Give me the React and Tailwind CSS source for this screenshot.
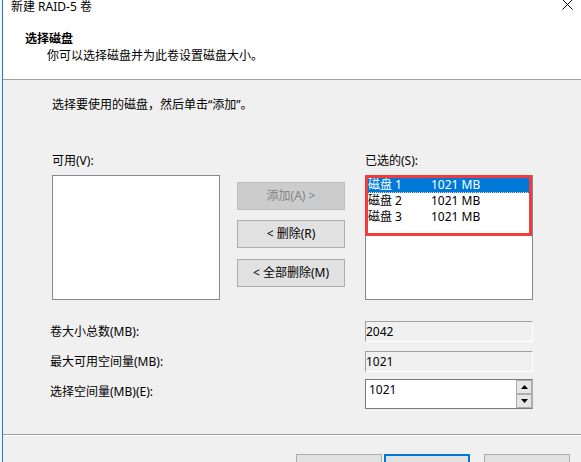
import React from "react";

const FONT = { fontFamily: '"Noto Sans", "Noto Sans CJK SC", sans-serif' };

function Btn({ children, disabled, className = "" }) {
  return (
    <div
      className={
        "flex h-[28px] w-[108px] shrink-0 items-center justify-center border text-[12px] leading-[16px] " +
        (disabled
          ? "border-[#bfbfbf] bg-[#cccccc] text-[#838383]"
          : "border-[#adadad] bg-[#e1e1e1] text-black") +
        " " +
        className
      }
    >
      {children}
    </div>
  );
}

function Arrow({ up }) {
  return (
    <svg width="7" height="4" viewBox="0 0 7 4">
      {up ? <path d="M0 4 L3.5 0 L7 4 Z" fill="#000" /> : <path d="M0 0 L3.5 4 L7 0 Z" fill="#000" />}
    </svg>
  );
}

export default function App() {
  const rows = [
    { n: "磁盘 1", s: "1021 MB", sel: true },
    { n: "磁盘 2", s: "1021 MB" },
    { n: "磁盘 3", s: "1021 MB" },
  ];
  return (
    <div className="flex h-[462px] w-[581px] overflow-hidden bg-white text-black" style={FONT}>
      <div className="w-[2px] shrink-0 bg-[#f4f4f4]" />
      <div className="w-px shrink-0 bg-[#1a7fd4]" />
      <div className="flex min-w-0 flex-1 flex-col">
        {/* header */}
        <div className="h-[79px] shrink-0 bg-white">
          <div className="flex h-[12px] items-start justify-between pl-[8px] pr-[8px] pt-px">
            <div className="text-[12px] leading-[12px]">新建 RAID-5 卷</div>
            <svg width="11" height="11" viewBox="0 0 11 11" className="mt-[-2px]">
              <path d="M0.5 0.5 L10.5 10.5 M10.5 0.5 L0.5 10.5" stroke="#000" strokeWidth="1" />
            </svg>
          </div>
          <div className="mt-[19px] pl-[22px] text-[12px] font-bold leading-[16px]">选择磁盘</div>
          <div className="mt-[1px] pl-[44px] text-[12px] leading-[16px]">
            你可以选择磁盘并为此卷设置磁盘大小。
          </div>
        </div>
        <div className="h-px shrink-0 bg-[#a0a0a0]" />
        {/* body */}
        <div className="flex min-h-0 flex-1 flex-col bg-[#f0f0f0]">
          <div className="shrink-0 pl-[49px] pt-[17px] text-[12px] leading-[16px]">
            选择要使用的磁盘，然后单击“添加”。
          </div>

          <div className="mt-[40px] flex shrink-0 pl-[49px]">
            <div className="flex w-[168px] flex-col">
              <div className="text-[12px] leading-[16px]">可用(V):</div>
              <div className="mt-[6px] h-[125px] border border-[#828790] bg-white" />
            </div>
            <div className="ml-[17px] flex flex-col pt-[29px]">
              <Btn disabled>添加(A) &gt;</Btn>
              <Btn className="mt-[10px]">&lt; 删除(R)</Btn>
              <Btn className="mt-[11px]">&lt; 全部删除(M)</Btn>
            </div>
            <div className="ml-[20px] flex w-[168px] flex-col">
              <div className="text-[12px] leading-[16px]">已选的(S):</div>
              <div className="relative mt-[6px] h-[125px] border border-[#828790] bg-white pt-px">
                {rows.map((r) => (
                  <div
                    key={r.n}
                    className={
                      "flex h-[16px] items-center pl-[2px] text-[12px] leading-[16px] " +
                      (r.sel ? "border-b border-dotted border-[#e8d9b0] bg-[#0078d7] text-white" : "text-black")
                    }
                  >
                    <span className="w-[63px]">{r.n}</span>
                    <span>{r.s}</span>
                  </div>
                ))}
                <div className="absolute left-[-1px] top-[-1px] h-[61px] w-[167px] border-[3px] border-[#f03c3c]" />
              </div>
            </div>
          </div>

          {/* form rows */}
          <div className="mt-[21px] flex h-[21px] shrink-0 items-center pl-[47px]">
            <div className="w-[315px] text-[12px] leading-[16px]">卷大小总数(MB):</div>
            <div className="flex h-[21px] w-[168px] items-center border-b border-l border-r border-t border-b-white border-l-[#a0a0a0] border-r-white border-t-[#a0a0a0] bg-[#f0f0f0] text-[12px] leading-[16px]">
              2042
            </div>
          </div>
          <div className="mt-[9px] flex h-[21px] shrink-0 items-center pl-[47px]">
            <div className="w-[315px] text-[12px] leading-[16px]">最大可用空间量(MB):</div>
            <div className="flex h-[21px] w-[168px] items-center border-b border-l border-r border-t border-b-white border-l-[#a0a0a0] border-r-white border-t-[#a0a0a0] bg-[#f0f0f0] text-[12px] leading-[16px]">
              1021
            </div>
          </div>
          <div className="mt-[7px] flex h-[30px] shrink-0 items-start pl-[47px]">
            <div className="w-[315px] pt-[5px] text-[12px] leading-[16px]">选择空间量(MB)(E):</div>
            <div className="flex h-[30px] w-[168px] border border-[#7a7a7a] border-r-[#adadad] bg-white">
              <div className="flex-1 pl-[3px] pt-[2px] text-[12px] leading-[16px]">1021</div>
              <div className="flex w-[16px] flex-col">
                <div className="flex h-[14px] items-center justify-center border border-[#adadad] bg-[#e6e6e6]">
                  <Arrow up />
                </div>
                <div className="flex h-[14px] items-center justify-center border border-[#adadad] bg-[#e6e6e6]">
                  <Arrow />
                </div>
              </div>
            </div>
          </div>

          <div className="mt-[25px] h-px shrink-0 bg-[#a0a0a0]" />
          <div className="h-px shrink-0 bg-white" />
          <div className="mt-[18px] flex shrink-0 pl-[293px]">
            <div className="h-[24px] w-[86px] border border-[#adadad] bg-[#e1e1e1]" />
            <div className="ml-[2px] h-[24px] w-[86px] border-2 border-[#0078d7] bg-[#e1e1e1]" />
            <div className="ml-[14px] h-[24px] w-[86px] border border-[#adadad] bg-[#e1e1e1]" />
          </div>
        </div>
      </div>
    </div>
  );
}
